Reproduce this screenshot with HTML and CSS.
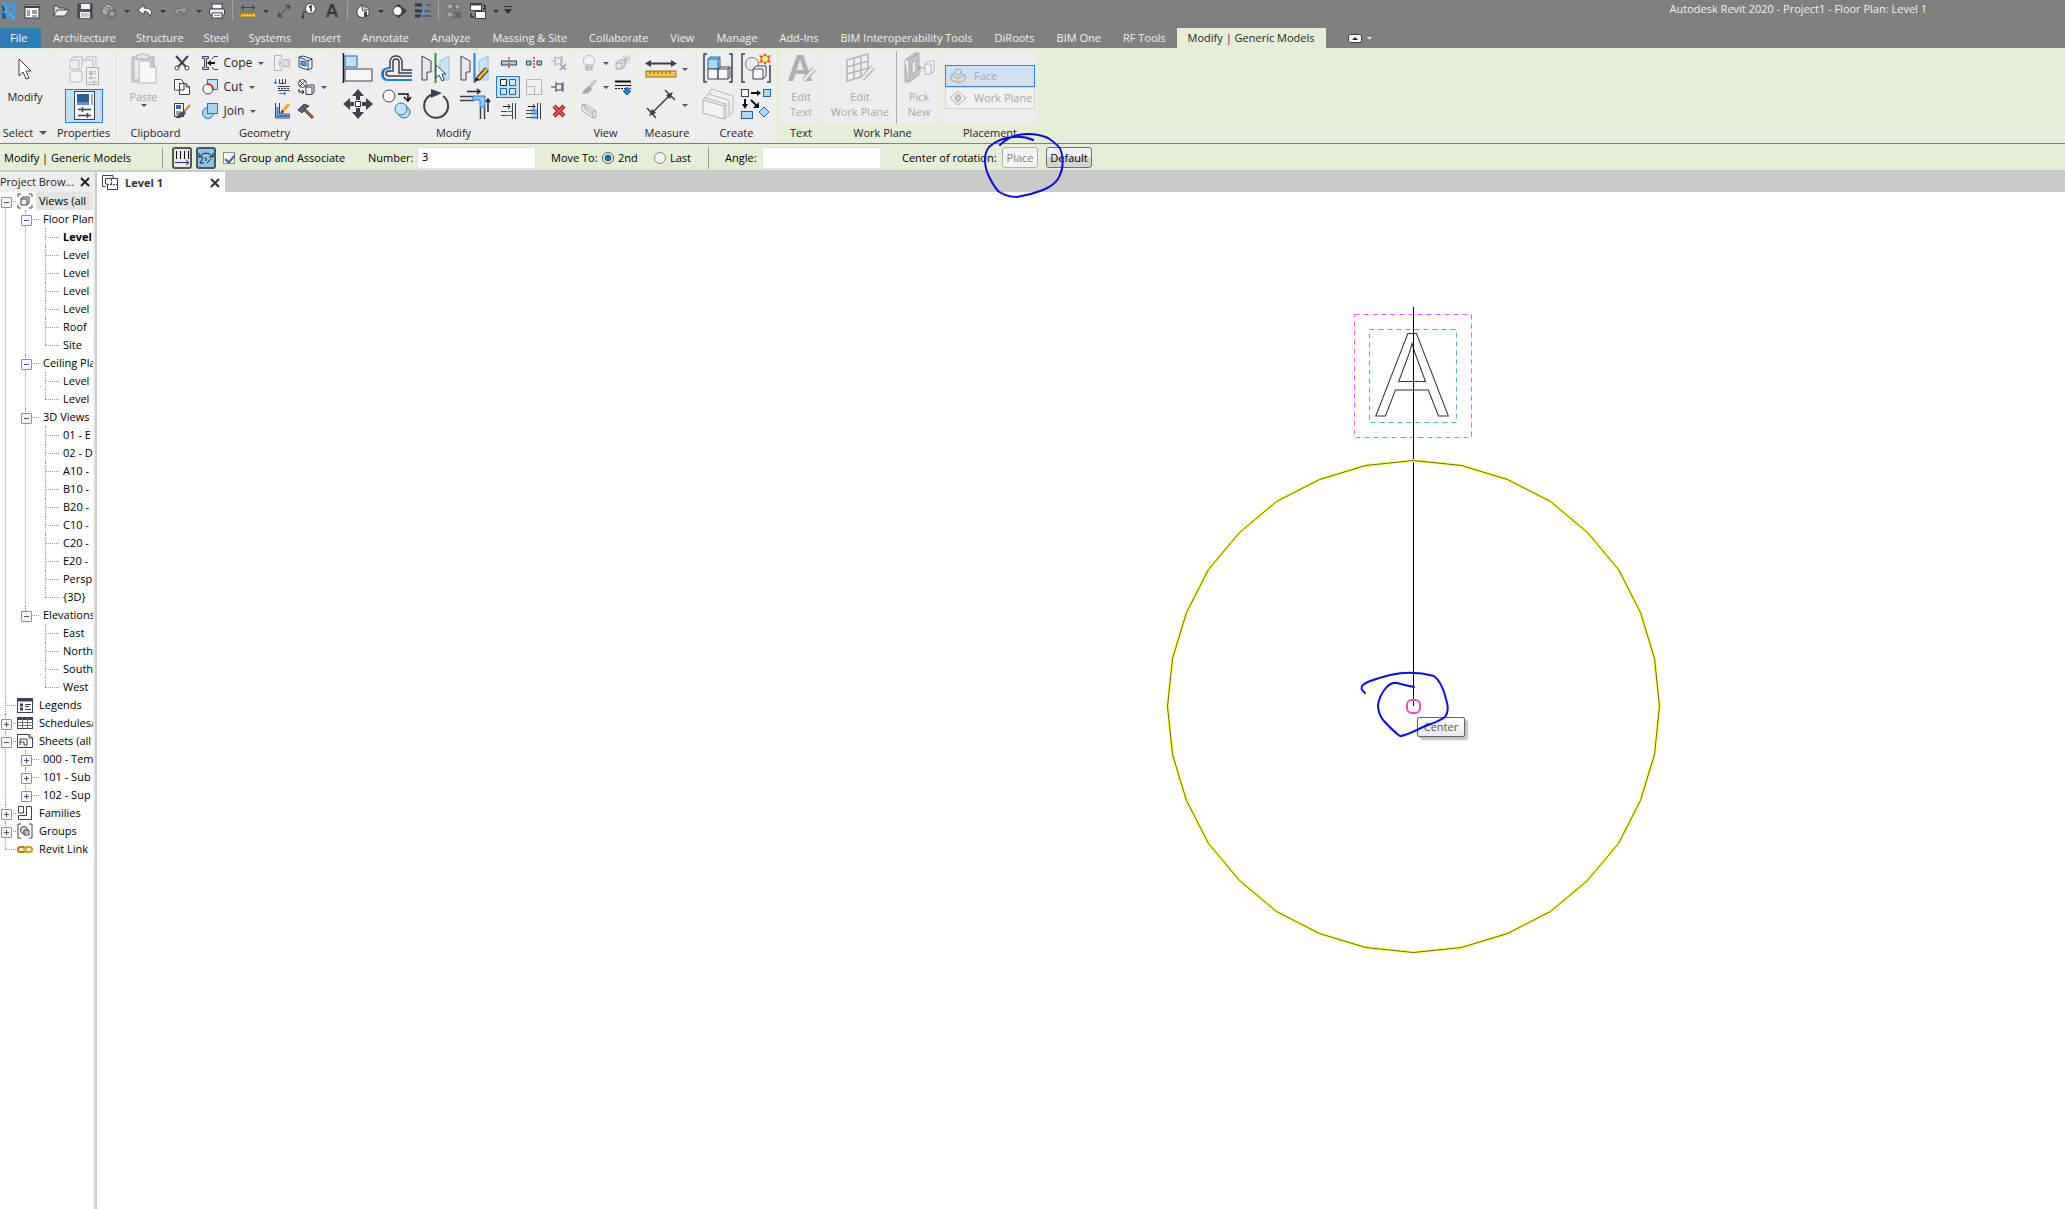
FILE: index.html
```html
<!DOCTYPE html>
<html lang="en">
<head>
<meta charset="utf-8">
<title>Autodesk Revit 2020 - Project1 - Floor Plan: Level 1</title>
<link rel="stylesheet" href="styles.css">
</head>
<body>
<header class="titlebar">
  <div class="quick">
    <button class="q logo" aria-label="Application menu"><svg width="18" height="20" viewBox="0 0 18 20"><path d="M3 18V4" stroke="#1560a8" stroke-width="4"/><path d="M3 4H9Q14 4 14 8T9 12H6L13 18" stroke="#3c9be8" stroke-width="4" fill="none"/><path d="M1 2L5 6V12M8 12L14 18" stroke="#84c8ff" fill="none"/></svg></button>
    <button class="q" aria-label="Recent files"><svg class="s" viewBox="0 0 16 16"><rect x="1" y="2" width="14" height="13" fill="#fff" stroke="#3b4150"/><path d="M1 4H15" stroke="#3b4150" stroke-width="2"/><path d="M3 8H6M3 10H6M3 12H6M8 8H13M8 10H13M8 13H13" stroke="#3b4150"/></svg></button>
    <i class="pad"></i>
    <button class="q" aria-label="Open"><svg class="s" viewBox="0 0 16 16"><path d="M1 13V3H5L6 5H12V7" fill="#ddd" stroke="#444b58"/><path d="M1 13L4 7H16L12 13Z" fill="#eee" stroke="#444b58"/></svg></button>
    <button class="q" aria-label="Save"><svg class="s" viewBox="0 0 16 16"><rect x="1" y="1" width="14" height="14" fill="#4b5260" stroke="#333947"/><rect x="4" y="1" width="9" height="5" fill="#f2f2f2"/><rect x="3" y="9" width="10" height="6" fill="#f2f2f2"/><path d="M4 11H12M4 13H12" stroke="#999"/></svg></button>
    <button class="q" aria-label="Synchronize"><svg class="s" viewBox="0 0 16 16"><path d="M1 5L6 1L12 3V9L6 13L1 10Z" fill="#b4b4b4" stroke="#666"/><path d="M1 5L6 7L12 3M6 7V13M3 3L9 5V11" fill="none" stroke="#777"/><circle cx="11" cy="11" r="4" fill="#888" stroke="#5a5a5a"/><path d="M9 11H13M11 9V13" stroke="#b4b4b4"/></svg></button>
    <button class="qc" aria-label="Sync options"><i class="caret"></i></button>
    <button class="q" aria-label="Undo"><svg class="s" viewBox="0 0 16 16"><path d="M7 2L1 7L7 12V8.500Q12 8 13 14Q18 5 7 5Z" fill="#fff" stroke="#444b58"/></svg></button>
    <button class="qc" aria-label="Undo list"><i class="caret"></i></button>
    <button class="q" aria-label="Redo"><svg class="s" viewBox="0 0 16 16"><path d="M9 2L15 7L9 12V8.500Q4 8 3 14Q-2 5 9 5Z" fill="#999" stroke="#666"/></svg></button>
    <button class="qc" aria-label="Redo list"><i class="caret"></i></button>
    <button class="q" aria-label="Print"><svg class="s" viewBox="0 0 16 16"><rect x="3" y="1" width="10" height="5" fill="#fff" stroke="#3b4150"/><rect x="0.5" y="6" width="15" height="6" rx="1" fill="#eee" stroke="#3b4150"/><rect x="3" y="10" width="10" height="5" fill="#fff" stroke="#3b4150"/><path d="M5 12.5H11" stroke="#888"/></svg></button>
    <i class="sep"></i>
    <button class="q" aria-label="Measure"><svg class="s" viewBox="0 0 16 16"><path d="M1 4.500H15M4 2L1 4.500L4 7M12 2L15 4.500L12 7" fill="none" stroke="#3b4150"/><rect x="0.500" y="10" width="15" height="4" fill="#f7c843" stroke="#a87a12"/><path d="M3 10V12M6 10V12M9 10V12M12 10V12" stroke="#8a6510"/></svg></button>
    <button class="qc" aria-label="Measure options"><i class="caret"></i></button>
    <button class="q" aria-label="Aligned dimension"><svg class="s" viewBox="0 0 16 16"><path d="M2 14L14 2M3 9V13H7M9 3H13V7M1 11L5 15M11 1L15 5" fill="none" stroke="#3b4150"/></svg></button>
    <button class="q" aria-label="Tag by category"><svg class="s" viewBox="0 0 16 16"><circle cx="10.500" cy="5.500" r="5" fill="#fff" stroke="#3b4150"/><path d="M9 4L11 3V8.500" fill="none" stroke="#222" stroke-width="1.500"/><path d="M6 9H3V14" fill="none" stroke="#333" /><circle cx="3" cy="14" r="1.500" fill="#333"/></svg></button>
    <button class="q" aria-label="Text"><span class="bigA">A</span></button>
    <i class="sep"></i>
    <button class="q" aria-label="3D view"><svg class="s" viewBox="0 0 16 16"><path d="M2 7L6 2L14 5V12L7 15L2 12Z" fill="#f4f4f4" stroke="#3b4150"/><path d="M6 2L14 5L11 8L8 8Z" fill="#b9bdc9" stroke="#555c6b"/><path d="M9 9.500L12 8.500V13L9 14Z" fill="#3b4150"/></svg></button>
    <button class="qc" aria-label="3D view options"><i class="caret"></i></button>
    <button class="q" aria-label="Section"><svg class="s" viewBox="0 0 16 16"><path d="M8 1L16 8L8 15L3 12V4Z" fill="#3b4150"/><circle cx="6.500" cy="8" r="4.500" fill="#fff" stroke="#3b4150"/></svg></button>
    <button class="q" aria-label="Thin lines"><svg class="s" viewBox="0 0 16 16"><path d="M0 2H7M0 8H7M0 13H7" stroke="#333947" stroke-width="3"/><path d="M10 2H16M9 8H16M7 13H16" stroke="#333947"/><path d="M6 15L11 1" stroke="#3c9bff" stroke-width="1.500"/></svg></button>
    <i class="sep"></i>
    <button class="q" aria-label="Close hidden windows"><svg class="s" viewBox="0 0 16 16"><path d="M1 1H7V6H1ZM9 1H14V6H9ZM1 9H7V14H1Z" fill="#a8a8a8" stroke="#666"/><path d="M9 9L15 15M15 9L9 15" stroke="#5d5d5d" stroke-width="2"/></svg></button>
    <button class="q" aria-label="Switch windows"><svg class="s" viewBox="0 0 16 16"><rect x="0.500" y="0.500" width="11" height="7" fill="#fff" stroke="#3b4150"/><path d="M1 1.500H11" stroke="#3b4150" stroke-width="2"/><rect x="5.500" y="8.500" width="10" height="7" fill="#fff" stroke="#3b4150"/><path d="M13 2H15V7M13 5L15 7M1 10V14H4" fill="none" stroke="#111"/></svg></button>
    <button class="qc" aria-label="Window list"><i class="caret"></i></button>
    <button class="qc" aria-label="Customize toolbar"><i class="caret over"></i></button>
  </div>
  <div class="apptitle">Autodesk Revit 2020 - Project1 - Floor Plan: Level 1</div>
</header>

<nav class="tabs">
  <a href="#" class="file">File</a><a href="#">Architecture</a><a href="#">Structure</a><a href="#">Steel</a><a href="#">Systems</a><a href="#">Insert</a><a href="#">Annotate</a><a href="#">Analyze</a><a href="#">Massing &amp; Site</a><a href="#">Collaborate</a><a href="#">View</a><a href="#">Manage</a><a href="#">Add-Ins</a><a href="#">BIM Interoperability Tools</a><a href="#">DiRoots</a><a href="#">BIM One</a><a href="#">RF Tools</a><a href="#" class="active">Modify | Generic Models</a>
  <button class="mini" aria-label="Minimize ribbon"><svg width="24" height="10" viewBox="0 0 24 10"><rect x="0.500" y="1.500" width="13" height="8" rx="2" fill="#fff" stroke="#333947"/><path d="M4 7L7 4L10 7Z" fill="#222"/><path d="M19 4H24L21.500 7Z" fill="#e8e8e8"/></svg></button>
</nav>

<section class="ribbon">
  <div class="panel w-select">
    <div class="body"><button class="tall"><svg class="l" viewBox="0 0 32 32"><path d="M10 7V24L14 20L17 27L20 26L17 19H22Z" fill="#fff" stroke="#3b4150"/></svg><span>Modify</span></button></div>
    <h2>Select <i class="caret big"></i></h2>
  </div>
  <div class="panel w-props">
    <div class="body col">
      <button class="tool" aria-label="Type properties" disabled><svg class="l" viewBox="0 0 32 32"><path d="M2 6L5 3H14V13L12 15H2ZM17 6L19 3H28V12M2 19L5 17H14V26L12 28H2ZM2 6H11V15M15 6H25V13" fill="#f2f2f2" stroke="#b9b9b9"/><rect x="18.500" y="13.500" width="12" height="17" fill="#f4f4f4" stroke="#b0b0b0"/><path d="M21 17H25V21H21Z" fill="#bbb"/><path d="M27 16V21M20 24H29M20 28H29M23 22V26M26 26V30" stroke="#b0b0b0"/></svg></button>
      <button class="tool wide on" aria-label="Properties"><svg class="l" viewBox="0 0 32 32"><rect x="6.500" y="1.500" width="20" height="28" fill="#f8f8f8" stroke="#3b4150"/><rect x="9" y="4" width="12" height="11" fill="#2e5f99"/><path d="M9 12H21V15H9Z" fill="#5b93cf"/><path d="M23 4H25V15H23Z" fill="#aaa"/><path d="M10 19.500H23M10 25.500H23M14.500 17V22M19.500 23V28" stroke="#3b4150" stroke-width="1.500"/></svg></button>
    </div>
    <h2>Properties</h2>
  </div>
  <div class="panel w-clip">
    <div class="body">
      <button class="tall" disabled><svg class="l" viewBox="0 0 32 32"><path d="M4 5H26V30H4Z" fill="#ccc" stroke="#b0b0b0"/><rect x="7" y="8" width="16" height="19" fill="#eee"/><path d="M9 7V3H12Q15 0 18 3H21V7Z" fill="#e4e4e4" stroke="#b0b0b0"/><path d="M11 9H22L28 15V31H11ZM22 9V15H28" fill="#f7f7f7" stroke="#b4b4b4"/></svg><span>Paste</span><i class="caret"></i></button>
      <div class="small c1">
        <button aria-label="Cut"><svg class="s" viewBox="0 0 16 16"><path d="M2 1L12 12M14 1L4 12" stroke="#3b4150" stroke-width="2"/><circle cx="3" cy="13" r="2" fill="#fff" stroke="#3b4150"/><circle cx="13" cy="13" r="2" fill="#fff" stroke="#3b4150"/></svg></button>
        <button aria-label="Copy"><svg class="s" viewBox="0 0 16 16"><path d="M.5 .5H7L10 4V11H.5ZM5.500 4.500H12L15.500 8V15.500H5.500ZM12 4V8H16" fill="#fff" stroke="#3b4150"/></svg></button>
        <button aria-label="Match type"><svg class="s" viewBox="0 0 16 16"><rect x=".5" y=".5" width="9" height="13" fill="#fff" stroke="#3b4150"/><path d="M2 2H7V6H2Z" fill="#2774b8"/><path d="M2 9H7M2 11H6" stroke="#3b4150"/><path d="M16 2L9 10" stroke="#c08a4b" stroke-width="2"/><path d="M10 8Q5 9 2 15Q9 16 12 10Z" fill="#4a5060"/></svg></button>
      </div>
    </div>
    <h2>Clipboard</h2>
  </div>
  <div class="panel w-geo">
    <div class="body">
      <div class="small rows">
        <button><svg class="s" viewBox="0 0 16 16"><path d="M.5 1.500H6.500V3.500H4.500V12.500H6.500V14.500H.5V12.500H2.500V3.500H.5Z" fill="#d5d8e0" stroke="#3b4150"/><path d="M16 1.500H12L10 4M10 12L12 14.500H16" fill="none" stroke="#3b4150"/><path d="M13 8H7" stroke="#111" stroke-width="2"/><path d="M5 8L9 5V11Z" fill="#111"/></svg>Cope<i class="caret"></i></button>
        <button><svg class="s" viewBox="0 0 16 16"><rect x="5.500" y=".5" width="10" height="10" fill="#bfe2f9" stroke="#2774b8"/><circle cx="6" cy="10" r="5" fill="#fff" stroke="#3b4150"/><path d="M5 5Q11 5 11 11" stroke="red" stroke-width="1.500" fill="none"/></svg>Cut<i class="caret"></i></button>
        <button><svg class="s" viewBox="0 0 16 16"><circle cx="6" cy="10" r="5.500" fill="#a9d5f5" stroke="#2774b8"/><rect x="5.500" y=".5" width="10" height="10" fill="#a9d5f5" stroke="#2774b8"/></svg>Join<i class="caret"></i></button>
      </div>
      <div class="small c2">
        <button aria-label="Join end cut" disabled><svg class="s" viewBox="0 0 16 16"><path d="M.5 .5H7.500V4L5 6V10L7.500 12V15.500H.5Z" fill="#f0f0f0" stroke="#b8b8b8"/><path d="M15.500 4.500H10L6 8L10 11.500H15.500Z" fill="#ddd" stroke="#b4b4b4"/></svg></button>
        <button aria-label="Wall joins"><svg class="s" viewBox="0 0 16 16"><path d="M5.500 0V4.500H11.500V0M8.500 0V4" stroke="#3b4150" fill="none"/><path d="M1.500 0V5M0 3L1.500 5L3 3M5 14.500H12M10 13L12 14.500L10 16" stroke="#1f86e0" fill="none"/><path d="M4 7.500H16M4 11.500H16" stroke="#3b4150"/><path d="M4 9.500H16" stroke="#222" stroke-dasharray="2 1"/></svg></button>
        <button aria-label="Beam joins"><svg class="s" viewBox="0 0 16 16"><path d="M1.500 0V15H16M5.500 0V11H16" fill="none" stroke="#3b4150"/><path d="M3.500 4V13H16" stroke="#1f86e0" fill="none" stroke-width="2"/><path d="M15 1L8 9" stroke="#f6a51c" stroke-width="3"/><path d="M8 7L6 11L10 9Z" fill="#222"/></svg></button>
      </div>
      <div class="small c2">
        <button aria-label="Split face"><svg class="s" viewBox="0 0 16 16"><path d="M1 2L5 1L14 4V13L10 15L1 12Z" fill="#eef" stroke="#3b4150"/><path d="M10 6L14 4M10 6V15M1 2L10 6" fill="none" stroke="#3b4150"/><path d="M3 6L8 7V11L3 10Z" fill="#4aa7ee" stroke="#1668b0"/></svg></button>
        <button aria-label="Paint"><svg class="s" viewBox="0 0 16 16"><circle cx="4.500" cy="4.500" r="4" fill="#fff" stroke="#3b4150"/><path d="M2 2L7 7M7 2L2 7" stroke="#3b4150"/><path d="M8 8L10 6H16V13L14 15.500H8ZM8 8H14V15" fill="#f5f5f5" stroke="#3b4150"/><path d="M1 10V13H6M4 11L6 13L4 15" fill="none" stroke="#111"/></svg></button>
        <button aria-label="Demolish"><svg class="s" viewBox="0 0 16 16"><path d="M6 6L15 15" stroke="#6d3a2a" stroke-width="3"/><path d="M6 6L15 15" stroke="#b5806c"/><path d="M0 7L6 1L11 3L8 5L4 10Z" fill="#59606e" stroke="#333947"/></svg></button>
      </div>
      <button class="side" aria-label="Paint options"><i class="caret"></i></button>
    </div>
    <h2>Geometry</h2>
  </div>
  <div class="panel w-mod">
    <div class="body">
      <div class="large c4">
        <button aria-label="Align"><svg class="l" viewBox="0 0 32 32"><path d="M1.500 1V31" stroke="#111" stroke-width="1.500"/><rect x="3" y="4" width="12" height="11" fill="#bfe2f9" stroke="#1668b0"/><rect x="3" y="17" width="27" height="12" fill="#f4f5f7" stroke="#3b4150"/></svg></button>
        <button aria-label="Offset"><svg class="l" viewBox="0 0 32 32"><path d="M31 18H21V9Q20 4 15 4T9 9V16Q2 16 2 22T7 28H31M31 24H8Q5 24 5 21.500T8 19H12V10Q12 7 15 7T18 10V21H31" fill="none" stroke="#3b4150" stroke-width="1.500"/><path d="M9 16Q1 16 1 22T7 28H31" fill="none" stroke="#1b86d8" stroke-width="2"/></svg></button>
        <button aria-label="Mirror - pick axis"><svg class="l" viewBox="0 0 32 32"><path d="M2 4L11 9V20H7V28H2Z" fill="#e7e8ec" stroke="#3b4150"/><path d="M29 4L20 9V20H24V28H29Z" fill="#c7e5f8" stroke="#8fc1e2"/><path d="M15.500 1V31" stroke="#2f9a38" stroke-width="2"/><path d="M16 13V26L19 23L22 29L24 28L22 22H26Z" fill="#fff" stroke="#3b4150"/></svg></button>
        <button aria-label="Mirror - draw axis"><svg class="l" viewBox="0 0 32 32"><path d="M2 4L11 9V20H7V28H2Z" fill="#e7e8ec" stroke="#3b4150"/><path d="M29 4L20 9V20H24V28H29Z" fill="#c7e5f8" stroke="#8fc1e2"/><path d="M15.500 1V31" stroke="#1b86e8" stroke-width="2"/><path d="M28 17L19 27" stroke="#3b2a10" stroke-width="5"/><path d="M28 17L19 27" stroke="#fbb52a" stroke-width="3"/><path d="M17 25L15 30L21 28Z" fill="#222"/></svg></button>
        <button aria-label="Move"><svg class="l" viewBox="0 0 32 32"><path d="M16 1L22 8H18V12H14V8H10ZM16 31L22 24H18V20H14V24H10ZM1 16L8 10V14H12V18H8V22ZM31 16L24 10V14H20V18H24V22Z" fill="#3b4150"/><rect x="13.500" y="13.500" width="5" height="5" fill="#fff" stroke="#3b4150"/></svg></button>
        <button aria-label="Copy"><svg class="l" viewBox="0 0 32 32"><circle cx="8" cy="8" r="6" fill="#fafafa" stroke="#3b4150"/><path d="M17 6H27V12M23 9L27 13L30 9" fill="none" stroke="#111" stroke-width="1.500"/><circle cx="23" cy="24" r="6" fill="#bfe2f9" stroke="#1b78c0"/><circle cx="20" cy="21" r="6" fill="#bfe2f9" stroke="#1b78c0"/></svg></button>
        <button aria-label="Rotate"><svg class="l" viewBox="0 0 32 32"><path d="M11 7A12 12 0 1 0 23 8" fill="none" stroke="#3b4150" stroke-width="2"/><path d="M11 1L22 5L11 10Z" fill="#3b4150"/></svg></button>
        <button aria-label="Trim to corner"><svg class="l" viewBox="0 0 32 32"><path d="M1 8.500H15M1 12.500H15M21.500 19V31M25.500 19V31" stroke="#3b4150" stroke-width="1.500"/><path d="M14 8H26V19H21V12H14Z" fill="#8ec9fa" stroke="#1b86e8"/><path d="M8 3.500H21M18 1L21 3.500L18 6M29 24V11M27 14L29 11L31 14" fill="none" stroke="#222" stroke-width="1.500"/></svg></button>
      </div>
      <div class="small c3 mid">
        <button aria-label="Split element"><svg class="s" viewBox="0 0 16 16"><rect x=".5" y="6" width="15" height="4" fill="#9ccff4" stroke="#3b4150"/><path d="M8 2V14" stroke="#e03020" stroke-width="1.500" stroke-dasharray="2 1"/></svg></button>
        <button aria-label="Split with gap"><svg class="s" viewBox="0 0 16 16"><path d="M.5 6H5V10H.5ZM11 6H15.500V10H11Z" fill="#9ccff4" stroke="#3b4150"/><path d="M8 2V14" stroke="#e03020" stroke-width="1.500" stroke-dasharray="2 1"/></svg></button>
        <button aria-label="Unpin" disabled><svg class="s" viewBox="0 0 16 16"><path d="M0 6H4M4 1V11M4 3H10V9H4M11 1V8" stroke="#aaa" fill="none"/><path d="M9 9L15 15M15 9L9 15" stroke="#aaa" stroke-width="2"/></svg></button>
        <button class="on" aria-label="Array"><svg class="s" viewBox="0 0 16 16"><path d="M.5 .5H6.500V6.500H.5Z" fill="#fff" stroke="#222"/><path d="M9.500 .5H15.500V6.500H9.500ZM.5 9.500H6.500V15.500H.5ZM9.500 9.500H15.500V15.500H9.500Z" fill="#c9e6fa" stroke="#1668b0"/></svg></button>
        <button aria-label="Scale" disabled><svg class="s" viewBox="0 0 16 16"><path d="M.5 .5H15.500V15.500H.5ZM.5 7.500H8.500V15.500" fill="#f0f0f0" stroke="#b4b4b4"/></svg></button>
        <button aria-label="Pin"><svg class="s" viewBox="0 0 16 16"><path d="M0 8H5M5 3V13M5 5H11V11H5M12 3V13" stroke="#3b4150" fill="none"/></svg></button>
        <button aria-label="Trim single"><svg class="s" viewBox="0 0 16 16"><path d="M11.500 0V16M14.500 0V16M0 8.500H5M0 12.500H5" stroke="#3b4150"/><path d="M5 8.500H11M5 12.500H11" stroke="#1b86e8"/><path d="M2 3.500H9M7 1L9 3.500L7 6" stroke="#222" fill="none"/></svg></button>
        <button aria-label="Trim multiple"><svg class="s" viewBox="0 0 16 16"><path d="M11.500 0V16M14.500 0V16M0 7.500H5M0 10.500H5M0 14.500H5" stroke="#3b4150"/><path d="M5 7.500H11M5 10.500H11M5 14.500H11" stroke="#1b86e8" stroke-width="2"/><path d="M2 3.500H9M7 1L9 3.500L7 6" stroke="#222" fill="none"/></svg></button>
        <button aria-label="Delete"><svg class="s" viewBox="0 0 16 16"><path d="M3 3L13 13M13 3L3 13" stroke="#8f1a14" stroke-width="4"/><path d="M3 3L13 13M13 3L3 13" stroke="#f0564a" stroke-width="2"/></svg></button>
      </div>
    </div>
    <h2>Modify</h2>
  </div>
  <div class="panel w-view">
    <div class="body">
      <div class="small c1">
        <button aria-label="Hide" disabled><svg class="s" viewBox="0 0 16 16"><circle cx="8" cy="6" r="5.500" fill="#f2f2f2" stroke="#bbb"/><path d="M5 10H11V15H5ZM5 12.500H11" fill="#ddd" stroke="#aaa"/></svg></button>
        <button aria-label="Override graphics" disabled><svg class="s" viewBox="0 0 16 16"><path d="M15 1L8 9" stroke="#c4c4c4" stroke-width="3"/><path d="M9 7Q4 8 1 15Q9 15 11 10Z" fill="#a8a8a8"/></svg></button>
        <button aria-label="Displace" disabled><svg class="s" viewBox="0 0 16 16"><path d="M1 2L4 1L15 8V14L12 15L1 8ZM1 2L12 9L15 8M12 9V15M4 1V6L12 12" fill="#eee" stroke="#aaa"/></svg></button>
      </div>
      <div class="carets"><i class="caret"></i><i class="caret"></i></div>
      <div class="small c1">
        <button aria-label="Selection box" disabled><svg class="s" viewBox="0 0 16 16"><path d="M1 8L4 5H10V11L7 14H1ZM1 8H7V14" fill="#e4e4e4" stroke="#aaa"/><path d="M11 0V9M7 4H16M8 1L15 8M15 1L8 8" stroke="#b5b5b5"/></svg></button>
        <button aria-label="Linework"><svg class="s" viewBox="0 0 16 16"><path d="M0 2.500H16" stroke="#111" stroke-width="2"/><path d="M0 6.500H16" stroke="#111"/><path d="M0 9.500H16" stroke="#111" stroke-dasharray="2 1"/><path d="M10 9H14V12H16L12 16L8 12H10Z" fill="#1b86e8" stroke="#1460a0"/></svg></button>
      </div>
    </div>
    <h2>View</h2>
  </div>
  <div class="panel w-meas">
    <div class="body">
      <div class="large c1">
        <button aria-label="Measure between"><svg class="l" viewBox="0 0 32 32"><path d="M4 11.500H28" stroke="#3b4150" stroke-width="2"/><path d="M0 11.500L6 8V15ZM32 11.500L26 8V15Z" fill="#3b4150"/><rect x="1" y="19" width="30" height="6" fill="#f7c843" stroke="#a06c10"/><path d="M5 19V22M9 19V22M13 19V22M17 19V22M21 19V22M25 19V22" stroke="#8a5f10"/></svg></button>
        <button aria-label="Aligned dimension"><svg class="l" viewBox="0 0 32 32"><path d="M6 26L26 6M2 20L11 30M20 2L30 12" stroke="#3b4150" stroke-width="1.500"/><path d="M4 28L7 21L11 25ZM28 4L25 11L21 7Z" fill="#3b4150"/></svg></button>
      </div>
      <div class="carets tallc"><i class="caret"></i><i class="caret"></i></div>
    </div>
    <h2>Measure</h2>
  </div>
  <div class="panel w-create">
    <div class="body">
      <div class="large c2">
        <button aria-label="Create assembly"><svg class="l" viewBox="0 0 32 32"><path d="M5 2H2V30H5M27 2H30V30H27" fill="none" stroke="#3b4150" stroke-width="1.500"/><path d="M6 17V7L8 5H18V15L16 17Z" fill="#a9d9f7" stroke="#1668b0"/><path d="M6 7H16V17M16 7L18 5" fill="none" stroke="#1668b0"/><path d="M6 17H16V27H6ZM16 17L19 15H28V25L26 27H16ZM16 17H26V27M26 17L28 15" fill="#fafafa" stroke="#3b4150"/></svg></button>
        <button aria-label="Create group"><svg class="l" viewBox="0 0 32 32"><path d="M5 2H2V30H5M27 30H30V13" fill="none" stroke="#3b4150" stroke-width="1.500"/><circle cx="12" cy="12" r="6.500" fill="#eee" stroke="#777"/><path d="M13 17L16 14H26V24L23 27H13ZM13 17H23V27" fill="#fafafa" stroke="#3b4150"/><path d="M25 1L27 4L31 3L29 7L31 11L27 10L25 13L23 10L19 11L21 7L19 3L23 4Z" fill="#f05a14"/><circle cx="25" cy="7" r="3" fill="#fff27a"/></svg></button>
        <button aria-label="Create similar" disabled><svg class="l" viewBox="0 0 32 32"><path d="M8 3L10 1L31 8V25L29 26L8 19Z" fill="#f0f0f0" stroke="#b8b8b8"/><path d="M4 8L6 6L27 12V28L25 29L4 23Z" fill="#f0f0f0" stroke="#b8b8b8"/><path d="M1 12L3 10L24 16V30L22 31L1 25ZM1 12L22 18L24 16M22 18V31" fill="#f4f4f4" stroke="#b0b0b0"/></svg></button>
        <button aria-label="Create parts"><svg class="l" viewBox="0 0 32 32"><rect x="1.500" y="1.500" width="7" height="7" fill="#fff" stroke="#3b4150"/><rect x="23.500" y="1.500" width="7" height="7" fill="#a9d9f7" stroke="#1668b0"/><rect x="1.500" y="23.500" width="11" height="7" fill="#a9d9f7" stroke="#1668b0"/><path d="M24 19L29 24L24 29L19 24Z" fill="#a9d9f7" stroke="#1668b0"/><path d="M11 5H18M5 11V18M11 12L17 18" stroke="#111" stroke-width="2"/><path d="M17 2L21 5L17 8ZM2 16L5 21L8 16ZM19 14V20H13Z" fill="#111"/></svg></button>
      </div>
    </div>
    <h2>Create</h2>
  </div>
  <div class="panel ctx w-text">
    <div class="body"><button class="tall" disabled><svg class="l" viewBox="0 0 32 32"><text x="2" y="29" class="iconA">A</text><path d="M29 17L19 28" stroke="#aaa" stroke-width="5"/><path d="M29 17L18 29" stroke="#e8e8e8" stroke-width="3"/></svg><span>Edit<br>Text</span></button></div>
    <h2>Text</h2>
  </div>
  <div class="panel ctx w-plane">
    <div class="body">
      <button class="tall" disabled><svg class="l" viewBox="0 0 32 32"><path d="M3 8L24 2V23L3 29ZM3 15L24 9M3 22L24 16M10 6V27M17 4V25" fill="#f0f0f0" stroke="#b4b4b4" stroke-width="1.500"/><path d="M29 15L18 27" stroke="#aaa" stroke-width="5"/><path d="M29 15L17 28" stroke="#e8e8e8" stroke-width="3"/></svg><span>Edit<br>Work Plane</span></button>
      <i class="vline"></i>
      <button class="tall pick" disabled><svg class="l" viewBox="0 0 32 32"><path d="M2 8L12 1H16V23L6 30H2Z" fill="#c4c4c4" stroke="#aaa"/><path d="M2 8H6V30M6 8L16 1M9 11L13 8V19L9 22Z" fill="#eee" stroke="#aaa"/><path d="M22 12L25 9H31V19L28 22H22ZM22 12H28V22" fill="#f4f4f4" stroke="#b4b4b4"/><path d="M22 16H16M18 14L15 16L18 19" stroke="#999" fill="none"/></svg><span>Pick<br>New</span></button>
    </div>
    <h2>Work Plane</h2>
  </div>
  <div class="panel ctx w-place">
    <div class="body place">
      <button class="pbtn on" disabled><svg class="s" viewBox="0 0 16 16"><path d="M1 7L7 4L15 7V12L8 15L1 12ZM1 7L8 10L15 7M8 10V15" fill="#ddd" stroke="#aaa"/><circle cx="8" cy="4" r="3" fill="#ddd" stroke="#aaa"/></svg>Face</button>
      <button class="pbtn" disabled><svg class="s" viewBox="0 0 16 16"><path d="M0 8L8 1L16 8L8 15Z" fill="#eee" stroke="#b4b4b4"/><path d="M5 8L8 4L11 8L8 12Z" fill="#ccc" stroke="#999"/></svg>Work Plane</button>
    </div>
    <h2>Placement</h2>
  </div>
</section>

<form class="options">
  <span>Modify | Generic Models</span>
  <i class="osep"></i>
  <button type="button" class="obtn" aria-label="Linear"><svg class="s" viewBox="0 0 16 16"><path d="M2.500 1V9M6.500 1V9M10.500 1V9M14.500 1V9" stroke="#111"/><path d="M1 12.500H15M12 10L15 12.500L12 15" fill="none" stroke="#1e2f9c"/></svg></button>
  <button type="button" class="obtn on" aria-label="Radial"><svg class="s" viewBox="0 0 16 16"><path d="M1 7Q8-1 15 7M1 3V7H5M15 3V7H11M8 7V11M5 8L2 13H6" fill="none" stroke="#123"/><path d="M9 13L13 9" stroke="#123"/></svg></button>
  <label class="chk"><input type="checkbox" checked>Group and Associate</label>
  <label for="num">Number:</label>
  <input id="num" type="text" value="3">
  <span>Move To:</span>
  <label class="rad"><input type="radio" name="mv" checked>2nd</label>
  <label class="rad"><input type="radio" name="mv">Last</label>
  <i class="osep"></i>
  <label for="ang">Angle:</label>
  <input id="ang" type="text">
  <span class="cor">Center of rotation:</span>
  <button type="button" class="push" disabled>Place</button>
  <button type="button" class="push def">Default</button>
</form>

<div class="work">
  <aside class="browser">
    <div class="bhead"><span>Project Brow...</span><button aria-label="Close browser"><svg width="10" height="10" viewBox="0 0 10 10"><path d="M1 1L9 9M9 1L1 9" stroke="#222" stroke-width="2"/></svg></button></div>
    <ul class="tree">
      <li class="open"><div class="row sel"><svg class="s" viewBox="0 0 16 16"><path d="M4 1H1V4M12 1H15V4M1 12V15H4M15 12V15H12" fill="none" stroke="#3b4150"/><path d="M4 6L6 4H12V10L10 12H4ZM4 6H10V12" fill="#f0f0f0" stroke="#3b4150"/></svg><span>Views (all</span></div>
        <ul>
          <li class="open"><div class="row">Floor Plans</div>
            <ul><li><div class="row"><b>Level</b></div></li><li><div class="row">Level</div></li><li><div class="row">Level</div></li><li><div class="row">Level</div></li><li><div class="row">Level</div></li><li><div class="row">Roof</div></li><li><div class="row">Site</div></li></ul></li>
          <li class="open"><div class="row">Ceiling Plans</div>
            <ul><li><div class="row">Level</div></li><li><div class="row">Level</div></li></ul></li>
          <li class="open"><div class="row">3D Views</div>
            <ul><li><div class="row">01 - E</div></li><li><div class="row">02 - D</div></li><li><div class="row">A10 -</div></li><li><div class="row">B10 -</div></li><li><div class="row">B20 -</div></li><li><div class="row">C10 -</div></li><li><div class="row">C20 -</div></li><li><div class="row">E20 -</div></li><li><div class="row">Persp</div></li><li><div class="row">{3D}</div></li></ul></li>
          <li class="open"><div class="row">Elevations</div>
            <ul><li><div class="row">East</div></li><li><div class="row">North</div></li><li><div class="row">South</div></li><li><div class="row">West</div></li></ul></li>
        </ul></li>
      <li><div class="row"><svg class="s" viewBox="0 0 16 16"><rect x=".5" y="1.500" width="15" height="14" fill="#fff" stroke="#3b4150"/><path d="M0 3H16" stroke="#3b4150" stroke-width="3"/><path d="M3 8H6M3 12H6" stroke="#3b4150" stroke-width="3"/><path d="M8 7.500H14M8 9.500H12M8 12.500H14" stroke="#3b4150"/></svg><span>Legends</span></div></li>
      <li class="shut"><div class="row"><svg class="s" viewBox="0 0 16 16"><rect x=".5" y="2.500" width="15" height="11" fill="#fff" stroke="#3b4150"/><path d="M0 3.500H16" stroke="#3b4150" stroke-width="3"/><path d="M0 7.500H16M0 10.500H16M5.500 3V14M10.500 3V14" stroke="#777"/></svg><span>Schedules/</span></div></li>
      <li class="open"><div class="row"><svg class="s" viewBox="0 0 16 16"><path d="M.5 1.500H12L15.500 5V14.500H.5ZM12 1V5H16" fill="#fff" stroke="#3b4150"/><path d="M3 12V6H10V12H7V9H3" fill="none" stroke="#3b4150"/></svg><span>Sheets (all</span></div>
        <ul><li class="shut"><div class="row">000 - Tem</div></li><li class="shut"><div class="row">101 - Sub</div></li><li class="shut"><div class="row">102 - Sup</div></li></ul></li>
      <li class="shut"><div class="row"><svg class="s" viewBox="0 0 16 16"><path d="M1.500 1.500H6.500V8H1.500ZM9.500 1.500H14.500V14.500H1.500V10.500H9.500Z" fill="#fff" stroke="#3b4150"/></svg><span>Families</span></div></li>
      <li class="shut"><div class="row"><svg class="s" viewBox="0 0 16 16"><path d="M4 1H1V15H4M12 1H15V15H12" fill="none" stroke="#3b4150"/><circle cx="7" cy="7" r="3.500" fill="#ddd" stroke="#3b4150"/><path d="M7 7H12V12H7Z" fill="#ccc" fill-opacity=".6" stroke="#3b4150"/></svg><span>Groups</span></div></li>
      <li><div class="row"><svg class="s" viewBox="0 0 16 16"><rect x="1" y="6" width="7" height="5" rx="2.500" fill="none" stroke="#b07a08" stroke-width="2"/><rect x="8" y="6" width="7" height="5" rx="2.500" fill="none" stroke="#d89a14" stroke-width="2"/><path d="M5 8.500H11" stroke="#f3bf3a" stroke-width="1.500"/></svg><span>Revit Link</span></div></li>
    </ul>
  </aside>
  <main class="viewer">
    <div class="doctabs">
      <div class="doctab"><svg class="s" viewBox="0 0 16 16"><path d="M3.500 11.500H.5V.5H11V4" fill="#fff" stroke="#3b4150"/><path d="M3.500 3.500H15.500V14.500H5.500V9H3.500Z" fill="#fff" stroke="#3b4150"/><path d="M9.500 4V9M5 9.500H16" stroke="#3b4150" stroke-dasharray="2 1"/></svg><b>Level 1</b><button aria-label="Close view"><svg width="10" height="10" viewBox="0 0 10 10"><path d="M1 1L9 9M9 1L1 9" stroke="#333" stroke-width="2"/></svg></button></div>
    </div>
    <div class="canvas">
      <svg class="layer" aria-hidden="true">
        <defs><polygon id="ring" points="0,-246 48,-241 94,-227 137,-205 174,-174 205,-137 227,-94 241,-48 246,0 241,48 227,94 205,137 174,174 137,205 94,227 48,241 0,246 -48,241 -94,227 -137,205 -174,174 -205,137 -227,94 -241,48 -246,0 -241,-48 -227,-94 -205,-137 -174,-174 -137,-205 -94,-227 -48,-241"/></defs>
        <rect x="1257.500" y="122.500" width="117" height="123" fill="none" stroke="#f45cf0" stroke-dasharray="5 4"/>
        <rect x="1272.500" y="137.500" width="87" height="93" fill="none" stroke="#4fb3d9" stroke-dasharray="5 4"/>
        <text x="1315" y="224" class="modelA">A</text>
        <path d="M1316.500 115V514" stroke="#000"/>
        <g transform="translate(1316.500 514.500)" fill="none"><use href="#ring" stroke="#ffff66" stroke-width="3"/><use href="#ring" stroke="#6e6e00"/></g>
        <rect x="1310" y="508" width="13" height="13" rx="5" fill="none" stroke="#d84fd0" stroke-width="2"/>
      </svg>
      <div class="tip">Center</div>
      <svg class="layer ink" aria-hidden="true"><path d="M1268 501Q1262 496 1266 493Q1270 489 1293 483Q1315 478 1337 484Q1345 490 1349 507Q1353 518 1348 525Q1343 529 1326 535Q1308 544 1303 544Q1297 540 1286 528Q1281 521 1281 513Q1282 505 1288 497Q1293 490 1300 491Q1307 493 1317 495"/></svg>
    </div>
  </main>
</div>
<svg class="ink mark" width="90" height="72" viewBox="975 130 90 72" aria-hidden="true"><path d="M1000 145Q1008 137 1018 135Q1034 132 1048 138Q1060 146 1061 151Q1065 163 1060 175Q1057 184 1043 190Q1030 195 1017 197Q1006 197 998 191Q992 184 987 172Q982 156 989 147Q999 138 1013 137Q1024 136 1033 140"/></svg>
</body>
</html>
```
FILE: styles.css
```css
* { box-sizing: border-box; }
body { margin: 0; min-height: 100vh; display: flex; flex-direction: column; position: relative; background: #fff; font: 11px/16px "Open Sans", "Noto Sans", sans-serif; color: #1e1e1e; overflow: hidden; }
button { font: inherit; color: inherit; background: none; border: 0; padding: 0; display: flex; align-items: center; justify-content: center; }
button:disabled { color: #a8a8a8; }
svg { display: block; flex: none; overflow: visible; }
.s { width: 16px; height: 16px; }
.l { width: 32px; height: 32px; }
.caret { flex: none; border: 3px solid transparent; border-top: 3px solid #555; border-bottom: 0; width: 6px; height: 3px; }
.caret.big { border-width: 4px 4px 0; width: 8px; height: 4px; }

.titlebar { background: #808080; height: 28px; display: flex; align-items: flex-start; justify-content: space-between; }
.quick { display: flex; align-items: center; height: 22px; }
.q { width: 24px; height: 22px; }
.q.logo { width: 20px; }
.qc { width: 12px; height: 22px; }
.quick .caret { border-top-color: #333; }
.caret.over { position: relative; border-width: 5px 4px 0; width: 8px; height: 5px; }
.caret.over::before { content: ""; position: absolute; left: -4px; top: -8px; width: 8px; height: 1px; background: #333; }
.pad { width: 5px; }
.sep { width: 1px; height: 20px; margin: 0 3px; background: #a4a4a4; }
.bigA { font: bold 18px/20px "Liberation Sans", sans-serif; color: #3b3b3b; }
.apptitle { color: #f0f0f0; margin-right: 138px; line-height: 18px; }

.tabs { background: #808080; height: 20px; display: flex; align-items: stretch; }
.tabs a { color: #f0f0f0; text-decoration: none; line-height: 19px; padding: 0 11px; white-space: nowrap; }
.tabs a:nth-child(-n+6) { padding: 0 10px; }
.tabs .file { background: #2b7cb8; color: #fff; width: 41px; margin-right: 2px; }
.tabs .active { background: #e5efd7; color: #1e1e1e; }
.mini { margin-left: 22px; }

.ribbon { background: #e5efd7; display: flex; gap: 2px; padding: 2px 0 1px; border-bottom: 1px solid #808080; }
.panel { background: #eee; display: flex; flex-direction: column; }
.panel h2 { margin: 0; height: 18px; font-size: 11px; line-height: 18px; font-weight: 400; display: flex; align-items: center; justify-content: center; gap: 6px; }
.body { height: 74px; display: flex; justify-content: center; }
.body.col { flex-direction: column; align-items: center; }
.ctx { background: #ededed; }
.ctx h2 { background: #e5efd7; }
.w-select { width: 50px; }
.w-props { width: 63px; }
.w-clip { width: 77px; }
.w-geo { width: 137px; }
.w-mod { width: 237px; }
.w-mod .body { justify-content: flex-start; padding-left: 3px; }
.w-view { width: 63px; }
.w-meas { width: 56px; }
.w-create { width: 79px; }
.w-text { width: 42px; margin-left: 2px; }
.w-plane { width: 117px; }
.w-place { width: 94px; }
.tall { flex-direction: column; justify-content: flex-start; padding-top: 2px; line-height: 15px; text-align: center; width: 54px; }
.tall svg { margin-bottom: 5px; }
.tool { width: 36px; height: 38px; }
.tool.wide { width: 38px; height: 34px; }
.on { background: #c5dff5; border: 1px solid #2a7cc9; }
.small { display: grid; grid-template-rows: repeat(3, 24px); grid-auto-columns: 24px; padding-top: 1px; align-content: start; }
.small.rows { grid-auto-columns: 70px; }
.small.rows button { justify-content: flex-start; gap: 6px; padding-left: 2px; font-size: 12px; }
.c3 { grid-template-columns: repeat(3, 25px); }
.mid { margin-left: 2px; }
.small .on { height: 22px; width: 24px; align-self: center; }
.large { display: grid; grid-template-rows: 36px 36px; }
.c4 { grid-template-columns: repeat(4, 39px); }
.large.c1 { grid-template-columns: 36px; }
.large.c2 { grid-template-columns: 38px 38px; }
.side { width: 12px; }
.carets { display: grid; grid-template-rows: 24px 24px; padding-top: 1px; align-content: start; place-items: center; width: 10px; }
.carets.tallc { grid-template-rows: 36px 36px; width: 12px; }
.vline { width: 1px; height: 72px; margin-top: 1px; background: #aaa; }
.w-plane .tall { width: 72px; }
.w-plane .pick { width: 44px; }
.iconA { font: bold 36px "Liberation Sans", sans-serif; fill: #b0b0b0; }
.place { flex-direction: column; justify-content: flex-start; align-items: center; padding-top: 15px; }
.pbtn { width: 90px; height: 22px; justify-content: flex-start; gap: 8px; padding-left: 4px; border: 1px solid #d4d4d4; background: #f1f1f1; }
.pbtn.on { background: #cfe0f0; border-color: #3c86cc; }

.options { background: #e5efd7; height: 26px; padding-top: 1px; display: grid; align-items: center; white-space: nowrap; grid-template-columns: 158px 10px 24px 27px 145px 49px 134px 51px 52px 54px 17px 37px 140px 100px 44px 46px; padding-left: 4px; color: #000; }
.osep { width: 1px; height: 22px; background: #a0a0a0; }
.obtn { width: 20px; height: 22px; border: 2px solid #555; border-radius: 3px; background: #e9e9e9; }
.obtn.on { background: #8cc4e8; border-color: #3a5a70; }
.options input[type=text] { font: inherit; width: 119px; height: 22px; border: 1px solid #dde3ea; background: #fff; padding: 0 4px 2px; }
.chk, .rad { display: flex; align-items: center; gap: 4px; }
.options input[type=checkbox], .options input[type=radio] { appearance: none; margin: 0; width: 12px; height: 12px; border: 1px solid #8e8f8f; background: #f4f4f4; flex: none; }
.options input[type=radio] { border-radius: 50%; }
.options input[type=radio]:checked { background: radial-gradient(circle, #1d6f9c 0 3px, #fff 4px); border-color: #555; }
.options input[type=checkbox]:checked { position: relative; }
.options input[type=checkbox]:checked::after { content: ""; position: absolute; left: 3px; top: 0; width: 4px; height: 8px; border: solid #4a5f97; border-width: 0 2px 2px 0; transform: rotate(40deg); }
.push { height: 21px; width: 36px; border: 1px solid #adb2b5; border-radius: 3px; background: #f4f4f4; }
.options .push:disabled { color: #838383; }
.def { width: 46px; border-color: #707070; background: linear-gradient(#f2f2f2 50%, #d4d4d4 50%); }

.work { flex: 1; display: flex; background: #cacaca; padding-top: 2px; }
.browser { width: 95px; background: #fff; border-right: 2px solid #eee; overflow: hidden; white-space: nowrap; }
.bhead { background: #eee; height: 20px; display: flex; align-items: center; justify-content: space-between; padding-right: 3px; width: 93px; }
.tree, .tree ul { list-style: none; margin: 0; padding: 0; }
.tree li { position: relative; }
.tree ul { padding-left: 20px; }
.row { height: 18px; line-height: 18px; padding-left: 23px; display: flex; align-items: center; color: #000; }
.tree > li > .row { padding-left: 17px; }
.row span { padding-left: 3px; margin-left: 3px; }
.sel span { background: #e3e3e3; width: 60px; }
.tree li::before { content: ""; position: absolute; left: 5px; top: 0; bottom: 0; border-left: 1px dotted #999; }
.tree li:last-child::before { bottom: auto; height: 9px; }
.tree > li:first-child::before { top: 9px; }
.row::before { content: ""; position: absolute; left: 5px; top: 9px; width: 14px; border-top: 1px dotted #999; }
.tree > li > .row::before { width: 11px; }
.open > .row::after, .shut > .row::after { content: ""; position: absolute; left: 1px; top: 5px; width: 9px; height: 9px; border: 1px solid #919191; border-radius: 1px; background: linear-gradient(#3b5a9c, #3b5a9c) center / 5px 1px no-repeat, #f6f6f6; }
.shut > .row::after { background: linear-gradient(#3b5a9c, #3b5a9c) center / 5px 1px no-repeat, linear-gradient(#3b5a9c, #3b5a9c) center / 1px 5px no-repeat, #f6f6f6; }

.viewer { flex: 1; display: flex; flex-direction: column; margin-left: 2px; min-width: 0; }
.doctabs { display: flex; }
.doctab { width: 128px; height: 20px; background: #fff; display: flex; align-items: center; padding: 1px 5px 0; gap: 7px; color: #333; }
.doctab button { margin-left: auto; }
.canvas { flex: 1; background: #fff; position: relative; overflow: hidden; }
.layer { position: absolute; inset: 0; width: 100%; height: 100%; }
.modelA { font: 115px "Open Sans", sans-serif; fill: none; stroke: #333; text-anchor: middle; }
.tip { position: absolute; left: 1320px; top: 525px; width: 48px; height: 20px; border: 1px solid #666; border-radius: 2px; background: linear-gradient(#fff, #e6e7f2); box-shadow: 3px 3px 2px #8888; text-align: center; line-height: 18px; color: #555; }
.ink { fill: none; stroke: #0a0af0; stroke-width: 2; stroke-linecap: round; pointer-events: none; }
.mark { position: absolute; left: 975px; top: 130px; }
```
